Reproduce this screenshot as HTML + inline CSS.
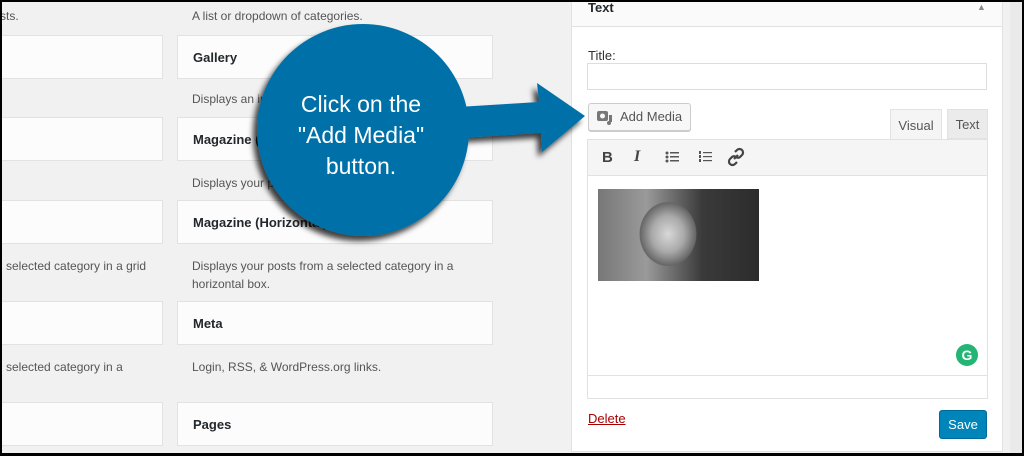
<!DOCTYPE html>
<html><head><meta charset="utf-8"><style>
*{box-sizing:border-box;margin:0;padding:0}
body{width:1024px;height:456px;overflow:hidden;background:#000;font-family:"Liberation Sans",sans-serif;position:relative}
#wrap{position:absolute;left:2px;top:2px;width:1020px;height:451px;background:#f1f1f1;overflow:hidden}
.card{position:absolute;background:#fcfcfc;border:1px solid #e2e2e2;height:44px;font-size:13px;font-weight:bold;color:#23282d;padding:14px 15px}
.d{position:absolute;font-size:12px;color:#555;line-height:18px}
.panel{position:absolute;left:569px;top:-4px;width:432px;height:454px;background:#fff;border:1px solid #e2e2e2}
.abs{position:absolute}
</style></head><body><div id="wrap">
<div class="d" style="left:-2px;top:5px">sts.</div>
<div class="d" style="left:190px;top:5px">A list or dropdown of categories.</div>
<div class="card" style="left:-4px;top:33px;width:165px"></div>
<div class="card" style="left:175px;top:33px;width:316px">Gallery</div>
<div class="d" style="left:190px;top:88px">Displays an image gallery.</div>
<div class="card" style="left:-4px;top:115px;width:165px"></div>
<div class="card" style="left:175px;top:115px;width:316px">Magazine (Grid)</div>
<div class="d" style="left:190px;top:172px">Displays your posts.</div>
<div class="card" style="left:-4px;top:198px;width:165px"></div>
<div class="card" style="left:175px;top:198px;width:316px">Magazine (Horizontal)</div>
<div class="d" style="left:4px;top:255px">selected category in a grid</div>
<div class="d" style="left:190px;top:255px">Displays your posts from a selected category in a<br>horizontal box.</div>
<div class="card" style="left:-4px;top:299px;width:165px"></div>
<div class="card" style="left:175px;top:299px;width:316px">Meta</div>
<div class="d" style="left:4px;top:356px">selected category in a</div>
<div class="d" style="left:190px;top:356px">Login, RSS, &amp; WordPress.org links.</div>
<div class="card" style="left:-4px;top:400px;width:165px"></div>
<div class="card" style="left:175px;top:400px;width:316px">Pages</div>
<div class="abs" style="left:1008px;top:0;width:12px;height:451px;background:#eaeaea"></div>

<div class="panel">
 <div class="abs" style="left:0;top:0;width:430px;height:28px;background:#fafafa;border-bottom:1px solid #e2e2e2"></div>
 <div class="abs" style="left:16px;top:1px;font-size:13px;font-weight:bold;color:#23282d">Text</div>
 <div class="abs" style="left:405px;top:3px;font-size:9px;color:#888">▲</div>
 <div class="abs" style="left:16px;top:49px;font-size:13px;color:#333">Title:</div>
 <div class="abs" style="left:15px;top:64px;width:400px;height:27px;border:1px solid #ddd;background:#fff"></div>
 <div class="abs" style="left:16px;top:104px;width:103px;height:28px;border:1px solid #ccc;background:#f7f7f7;border-radius:3px;box-shadow:0 1px 0 #ccc;font-size:13px;color:#555;padding:5px 0 0 31px">Add Media</div>
 <svg class="abs" style="left:24px;top:111px" width="18" height="16" viewBox="0 0 18 16"><rect x="1" y="1" width="11" height="10" rx="2" fill="#777"/><circle cx="6.5" cy="6" r="2.5" fill="#f7f7f7"/><rect x="13" y="5" width="3" height="7" fill="#777"/><circle cx="13" cy="13" r="2" fill="#777"/></svg>
 <div class="abs" style="left:318px;top:110px;width:52px;height:31px;background:#f5f5f5;border:1px solid #e2e2e2;border-bottom:none;font-size:13px;color:#555;text-align:center;padding-top:8px">Visual</div>
 <div class="abs" style="left:375px;top:110px;width:41px;height:30px;background:#ebebeb;border:1px solid #e2e2e2;font-size:13px;color:#555;text-align:center;padding-top:7px">Text</div>
 <div class="abs" style="left:15px;top:140px;width:401px;height:260px;border:1px solid #e2e2e2;background:#fff"></div>
 <div class="abs" style="left:16px;top:141px;width:399px;height:36px;background:#f5f5f5;border-bottom:1px solid #e2e2e2"></div>
 <div class="abs" style="left:30px;top:150px;font-size:15px;font-weight:bold;color:#444">B</div>
 <div class="abs" style="left:62px;top:149px;font-size:16px;font-style:italic;font-weight:bold;font-family:'Liberation Serif',serif;color:#444">I</div>
 <svg class="abs" style="left:93px;top:151px" width="14" height="14"><g fill="#555"><circle cx="2" cy="3" r="1.5"/><circle cx="2" cy="7" r="1.5"/><circle cx="2" cy="11" r="1.5"/><rect x="5" y="2" width="9" height="1.5"/><rect x="5" y="6" width="9" height="1.5"/><rect x="5" y="10" width="9" height="1.5"/></g></svg>
 <svg class="abs" style="left:126px;top:151px" width="14" height="14"><g fill="#555"><rect x="1" y="1" width="2" height="3"/><rect x="1" y="5" width="2" height="3"/><rect x="1" y="9" width="2" height="3"/><rect x="5" y="2" width="9" height="1.2"/><rect x="5" y="6" width="9" height="1.2"/><rect x="5" y="10" width="9" height="1.2"/></g></svg>
 <svg class="abs" style="left:154px;top:148px" width="20" height="20" viewBox="0 0 20 20"><g fill="none" stroke="#444" stroke-width="2.2"><path d="M9 5l2-2a3 3 0 0 1 5 5l-2 2a3 3 0 0 1-4 0"/><path d="M11 15l-2 2a3 3 0 0 1-5-5l2-2a3 3 0 0 1 4 0"/><path d="M8 12l4-4"/></g></svg>
 <div class="abs" style="left:26px;top:190px;width:161px;height:92px;background:radial-gradient(ellipse 40px 45px at 70px 45px,#d8d8d8,#aaa 40%,#666 70%,transparent 72%),linear-gradient(90deg,#777,#9a9a9a 30%,#3a3a3a 65%,#2c2c2c)"></div>
 <div class="abs" style="left:384px;top:345px;width:22px;height:22px;border-radius:50%;background:#22b573;color:#fff;font-weight:bold;font-size:14px;text-align:center;line-height:22px">G</div>
 <div class="abs" style="left:16px;top:376px;width:399px;height:1px;background:#e2e2e2"></div>
 <div class="abs" style="left:16px;top:412px;font-size:13px;color:#a00;text-decoration:underline">Delete</div>
 <div class="abs" style="left:367px;top:411px;width:48px;height:29px;background:#0085ba;border:1px solid #006799;border-radius:3px;color:#fff;font-size:13px;text-align:center;line-height:27px">Save</div>
</div>

<svg class="abs" style="left:0;top:0" width="1020" height="451">
 <defs><filter id="sh" x="-30%" y="-30%" width="160%" height="160%"><feDropShadow dx="-4" dy="5" stdDeviation="3" flood-color="#000" flood-opacity="0.75"/></filter></defs>
 <g filter="url(#sh)" fill="#0171a8">
  <path d="M440 106 L537 100 L535 81 L583 114 L540 150 L539 131 L440 137 Z"/>
  <circle cx="361" cy="128" r="106"/>
 </g>
 <g fill="#fff" font-family="'Liberation Sans',sans-serif" font-size="23" text-anchor="middle">
  <text x="359" y="110">Click on the</text>
  <text x="359" y="141">"Add Media"</text>
  <text x="359" y="172">button.</text>
 </g>
</svg>
</div></body></html>
